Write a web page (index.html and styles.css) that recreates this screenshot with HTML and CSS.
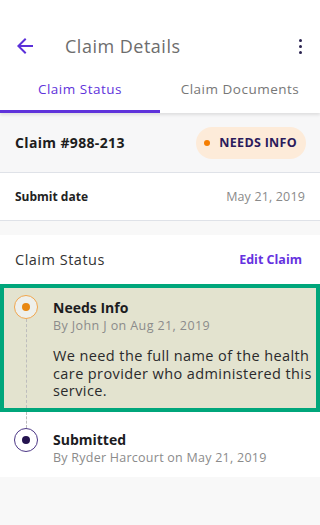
FILE: index.html
```html
<!DOCTYPE html>
<html lang="en">
<head>
<meta charset="utf-8">
<title>Claim Details</title>
<link rel="stylesheet" href="styles.css">
</head>
<body>
<div class="app">
  <header class="topbar">
    <div class="appbar">
      <button class="icon-btn back" aria-label="Back">
        <svg width="24" height="24" viewBox="0 0 24 24"><path d="M20 11H7.83l5.59-5.59L12 4l-8 8 8 8 1.41-1.41L7.83 13H20v-2z" fill="#5b30d9"/></svg>
      </button>
      <h1 class="title">Claim Details</h1>
      <button class="icon-btn more" aria-label="More">
        <span class="dot"></span><span class="dot"></span><span class="dot"></span>
      </button>
    </div>
    <nav class="tabs">
      <div class="tab active">Claim Status</div>
      <div class="tab">Claim Documents</div>
    </nav>
  </header>

  <section class="claim-row">
    <div class="claim-no">Claim #988-213</div>
    <div class="badge"><span class="badge-dot"></span>NEEDS INFO</div>
  </section>

  <section class="submit-row">
    <div class="label">Submit date</div>
    <div class="value">May 21, 2019</div>
  </section>

  <section class="status">
    <div class="status-head">
      <div class="status-title">Claim Status</div>
      <a class="edit">Edit Claim</a>
    </div>

    <div class="item highlight">
      <div class="marker">
        <span class="circle warn"><span class="inner"></span></span>
        <span class="tail"></span>
      </div>
      <div class="content">
        <div class="item-title">Needs Info</div>
        <div class="item-sub">By John J on Aug 21, 2019</div>
        <p class="item-body">We need the full name of the health care provider who administered this service.</p>
      </div>
    </div>

    <div class="item">
      <div class="marker">
        <span class="lead"></span>
        <span class="circle done"><span class="inner"></span></span>
      </div>
      <div class="content second">
        <div class="item-title">Submitted</div>
        <div class="item-sub">By Ryder Harcourt on May 21, 2019</div>
      </div>
    </div>
  </section>
</div>
</body>
</html>
```

FILE: styles.css
```css
* { box-sizing: border-box; }
html, body { margin: 0; padding: 0; }
body {
  background: #f8f8f8;
  font-family: "Open Sans", Lato, "Liberation Sans", sans-serif;
  color: #1e1e22;
  width: 320px;
}
.topbar {
  background: #fff;
  padding-top: 24px;
  box-shadow: 0 2px 3px rgba(0,0,0,0.10);
  position: relative;
  z-index: 1;
}
.appbar {
  height: 44px;
  display: flex;
  align-items: center;
  padding: 0 13px 0 13px;
}
.icon-btn {
  background: none;
  border: 0;
  padding: 0;
  display: flex;
  align-items: center;
  justify-content: center;
  cursor: pointer;
}
.back { width: 24px; height: 24px; }
.title {
  margin: 0 0 0 28px;
  font-size: 18px;
  font-weight: 400;
  color: #6d6d6d;
  letter-spacing: 0.5px;
  flex: 1;
}
.more {
  width: 14px;
  height: 24px;
  flex-direction: column;
  gap: 3px;
}
.more .dot {
  width: 3px; height: 3px; border-radius: 50%;
  background: #2a2350;
}
.tabs {
  display: flex;
  height: 45px;
}
.tab {
  flex: 1;
  display: flex;
  align-items: center;
  justify-content: center;
  font-size: 13.5px;
  letter-spacing: 0.5px;
  color: #777;
  padding-bottom: 1px;
  border-bottom: 3px solid transparent;
}
.tab.active {
  color: #5f33db;
  border-bottom-color: #5f33db;
}
.claim-row {
  height: 60px;
  background: #f7f7f8;
  display: flex;
  align-items: center;
  justify-content: space-between;
  padding: 0 14px 0 15px;
  border-bottom: 1px solid #dfe2e8;
}
.claim-no {
  font-weight: 700;
  font-size: 14px;
  letter-spacing: 0.35px;
  color: #1d1d20;
}
.badge {
  height: 32px;
  border-radius: 16px;
  background: #fdebd9;
  display: flex;
  align-items: center;
  padding: 0 9px 0 8px;
  font-size: 12.5px;
  font-weight: 700;
  letter-spacing: 0.3px;
  color: #2c1b5c;
}
.badge-dot {
  width: 6px; height: 6px; border-radius: 50%;
  background: #f57d00;
  margin-right: 9px;
}
.submit-row {
  height: 48px;
  background: #fff;
  display: flex;
  align-items: center;
  justify-content: space-between;
  padding: 0 15px;
  border-bottom: 1px solid #dfe2e8;
}
.submit-row .label {
  font-size: 12px;
  font-weight: 700;
  color: #222;
}
.submit-row .value {
  font-size: 12.5px;
  letter-spacing: 0.15px;
  color: #8a8a8a;
}
.status {
  margin-top: 14px;
  background: #fff;
  padding-bottom: 11px;
}
.status-head {
  height: 49px;
  display: flex;
  align-items: center;
  justify-content: space-between;
  padding: 0 18px 0 15px;
}
.status-title {
  font-size: 14.5px;
  letter-spacing: 0.5px;
  color: #333;
}
.edit {
  font-size: 12.5px;
  font-weight: 700;
  color: #6532e0;
}
.item {
  display: flex;
  padding: 0 4px;
}
.item.highlight {
  background: #e3e3cf;
  border: 4px solid #00a67b;
  padding: 7px 0 0 0;
}
.marker {
  width: 44px;
  display: flex;
  flex-direction: column;
  align-items: center;
  flex: none;
}
.circle {
  width: 24px; height: 24px;
  border-radius: 50%;
  display: flex;
  align-items: center;
  justify-content: center;
  flex: none;
}
.circle .inner {
  width: 8px; height: 8px; border-radius: 50%;
}
.circle.warn { border: 1.5px solid #f1a64d; background: #eef0ec; }
.circle.warn .inner { background: #e88812; }
.circle.done { border: 1.5px solid #4c3786; background: #fff; }
.circle.done .inner { background: #24134f; }
.tail, .lead {
  width: 0;
  border-left: 1.5px dashed #bdbdbd;
}
.tail { flex: 1; }
.lead { height: 16px; }
.content {
  flex: 1;
  padding: 3px 0 8px 5px;
}
.content.second { padding-top: 18px; padding-bottom: 0; }
.item-title {
  font-size: 14px;
  font-weight: 700;
  line-height: 20px;
  color: #1c1c1f;
}
.item-sub {
  font-size: 12.5px;
  line-height: 16px;
  letter-spacing: 0.4px;
  color: #8b8b8b;
}
.content.second .item-sub { letter-spacing: 0.25px; }
.item-body {
  margin: 13px 0 0;
  font-size: 14.5px;
  line-height: 17.5px;
  letter-spacing: 0.4px;
  color: #2a2a2c;
}
```
